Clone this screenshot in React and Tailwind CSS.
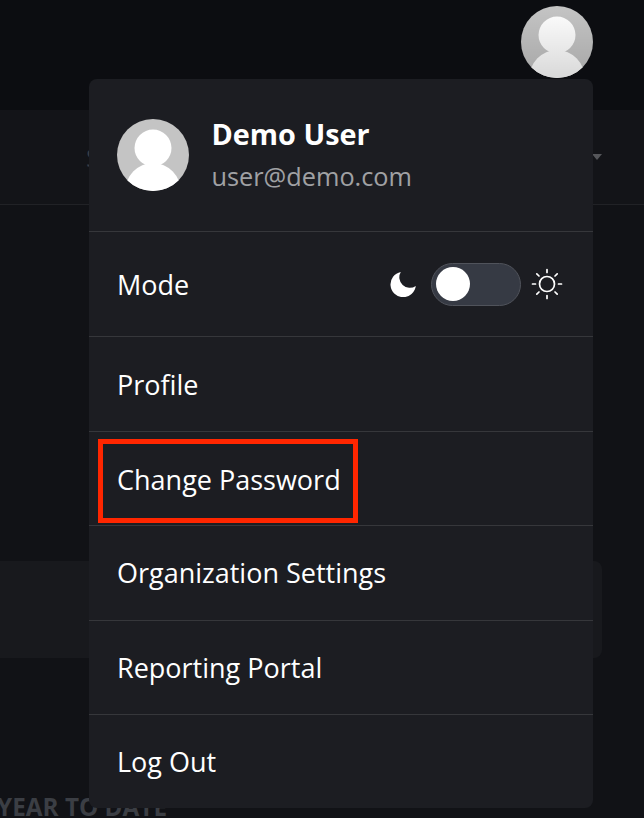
import { useState } from "react";

const items = [
  { label: "Profile", row: "h-[95px] pt-[1px]" },
  { label: "Change Password", row: "h-[94px]" },
  { label: "Organization Settings", row: "h-[95px]" },
  { label: "Reporting Portal", row: "h-[94px]" },
  { label: "Log Out", row: "h-[93px] pt-[1px]" },
];

function Avatar({ id }) {
  return (
    <svg viewBox="0 0 72 72" className="block w-[72px] h-[72px] shrink-0">
      <clipPath id={id}>
        <circle cx="36" cy="36" r="36" />
      </clipPath>
      <g clipPath={`url(#${id})`}>
        <rect width="72" height="72" fill="#c4c4c4" />
        <circle cx="36" cy="29" r="18.5" fill="#fff" />
        <ellipse cx="36" cy="73" rx="28" ry="29" fill="#fff" />
      </g>
    </svg>
  );
}

function Moon() {
  return (
    <svg viewBox="0 0 26 26" className="w-[26px] h-[26px]">
      <path d="M10.800 1A10.500 10.500 0 0 0 25.800 15 12.700 12.700 0 1 1 10.800 1Z" fill="#fff" />
    </svg>
  );
}

function Sun() {
  return (
    <svg viewBox="0 0 32 32" className="w-8 h-8" fill="none" stroke="#fff" strokeWidth="1.7" strokeLinecap="round">
      <circle cx="16" cy="16" r="7.5" />
      <path d="M16 1.5v3M16 27.500v3M1.500 16h3M27.500 16h3M5.800 5.800l2.200 2.200M24 24l2.200 2.200M5.800 26.200 8 24M24 8l2.200-2.200" />
    </svg>
  );
}

export default function App() {
  const [dark, setDark] = useState(true);

  return (
    <div className="relative h-[818px] overflow-hidden bg-[#111216] font-['Open_Sans',sans-serif]">
      {/* page behind the menu */}
      <div className="h-[110px] bg-[#0c0d11]" />
      <div className="h-[95px] bg-[#131418] border-b border-[#212226] flex items-center justify-between pl-[86px] pr-[42px]">
        <span className="text-[26px] leading-[34px] text-[#3b3e44]">S</span>
        <div className="w-0 h-0 border-x-[5px] border-x-transparent border-t-[6px] border-t-[#55565a]" />
      </div>
      <div className="h-[356px]" />
      <div className="h-[97px] mr-[42px] rounded-r-lg bg-[#18191d]" />
      <div className="pt-[134px] -ml-[3px] text-[24.3px] leading-[30px] font-bold text-[#3b3e44] whitespace-nowrap">
        YEAR TO DATE
      </div>

      {/* top avatar, dimmed by the page overlay */}
      <div className="absolute top-[6px] left-[521px]">
        <Avatar id="top-avatar" />
        <div className="absolute inset-0 rounded-full bg-gradient-to-b from-black/0 to-black/15" />
      </div>

      {/* user menu */}
      <div className="absolute top-[79px] left-[89px] w-[504px] h-[729px] rounded-lg bg-[#1c1d22] flex flex-col text-white">
        <div className="h-[153px] shrink-0 flex items-center gap-[23px] pl-[28px] border-b border-[#36373b]">
          <Avatar id="menu-avatar" />
          <div className="-ml-[0.5px]">
            <div className="text-[28.800px] leading-[36px] font-bold">Demo User</div>
            <div className="mt-[6px] text-[25.300px] leading-[36px] text-[#a0a1a4]">user@demo.com</div>
          </div>
        </div>

        <div className="h-[105px] shrink-0 flex items-center justify-between pt-[1px] pl-[28px] pr-[30px] border-b border-[#36373b]">
          <span className="text-[27px] leading-[36px]">Mode</span>
          <div className="flex items-center -mt-[1px]">
            <Moon />
            <button
              onClick={() => setDark(!dark)}
              className="ml-[15px] mr-[10px] w-[90px] h-[43px] rounded-full bg-[#363a44] border border-[#50535b] flex items-center px-1"
            >
              <span className={`block w-[34px] h-[34px] rounded-full bg-white ${dark ? "" : "ml-auto"}`} />
            </button>
            <Sun />
          </div>
        </div>

        {items.map((item, i) => (
          <div
            key={item.label}
            className={`${item.row} shrink-0 flex items-center pl-[28px] text-[27px] leading-[36px] ${i < items.length - 1 ? "border-b border-[#36373b]" : ""}`}
          >
            {item.label === "Change Password" ? (
              <span className="-ml-[19px] mt-[5px] pl-[14px] pr-[12px] pb-[3px] h-[84px] flex items-center border-[5px] border-[#ff2600]">{item.label}</span>
            ) : (
              item.label
            )}
          </div>
        ))}
      </div>
    </div>
  );
}
